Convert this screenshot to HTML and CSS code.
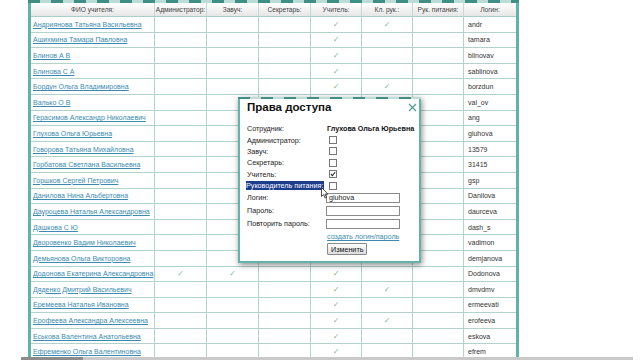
FILE: index.html
```html
<!DOCTYPE html>
<html lang="ru">
<head>
  <meta charset="UTF-8">
  <title>Права доступа</title>
  <link rel="stylesheet" href="styles.css">
</head>
<body>
  <div class="sheet">
    <table class="staff">
      <colgroup>
        <col class="c-name"><col class="c-wide"><col class="c-wide"><col class="c-wide">
        <col class="c-narrow"><col class="c-narrow"><col class="c-narrow"><col class="c-wide">
      </colgroup>
      <thead>
        <tr>
          <th>ФИО учителя:</th><th>Администратор:</th><th>Завуч:</th><th>Секретарь:</th>
          <th>Учитель:</th><th>Кл. рук.:</th><th>Рук. питания:</th><th>Логин:</th>
        </tr>
      </thead>
      <tbody>
        <tr><td class="name"><a href="#">Андриянова Татьяна Васильевна</a></td><td></td><td></td><td></td><td class="mark">✓</td><td class="mark">✓</td><td></td><td>andr</td></tr>
        <tr><td class="name"><a href="#">Ашихмина Тамара Павловна</a></td><td></td><td></td><td></td><td class="mark">✓</td><td></td><td></td><td>tamara</td></tr>
        <tr><td class="name"><a href="#">Блинов А В</a></td><td></td><td></td><td></td><td class="mark">✓</td><td></td><td></td><td>blinovav</td></tr>
        <tr><td class="name"><a href="#">Блинова С А</a></td><td></td><td></td><td></td><td class="mark">✓</td><td></td><td></td><td>sablinova</td></tr>
        <tr><td class="name"><a href="#">Бордун Ольга Владимировна</a></td><td></td><td></td><td></td><td class="mark">✓</td><td class="mark">✓</td><td></td><td>borzdun</td></tr>
        <tr><td class="name"><a href="#">Валько О В</a></td><td></td><td></td><td></td><td></td><td></td><td></td><td>val_ov</td></tr>
        <tr><td class="name"><a href="#">Герасимов Александр Николаевич</a></td><td></td><td></td><td></td><td></td><td></td><td></td><td>ang</td></tr>
        <tr><td class="name"><a href="#">Глухова Ольга Юрьевна</a></td><td></td><td></td><td></td><td></td><td></td><td></td><td>gluhova</td></tr>
        <tr><td class="name"><a href="#">Говорова Татьяна Михайловна</a></td><td></td><td></td><td></td><td></td><td></td><td></td><td>13579</td></tr>
        <tr><td class="name"><a href="#">Горбатова Светлана Васильевна</a></td><td></td><td></td><td></td><td></td><td></td><td></td><td>31415</td></tr>
        <tr><td class="name"><a href="#">Горшков Сергей Петрович</a></td><td></td><td></td><td></td><td></td><td></td><td></td><td>gsp</td></tr>
        <tr><td class="name"><a href="#">Данилова Нина Альбертовна</a></td><td></td><td></td><td></td><td></td><td></td><td></td><td>Danilova</td></tr>
        <tr><td class="name"><a href="#">Дауроцева Наталья Александровна</a></td><td></td><td></td><td></td><td></td><td></td><td></td><td>daurceva</td></tr>
        <tr><td class="name"><a href="#">Дашкова С Ю</a></td><td></td><td></td><td></td><td></td><td></td><td></td><td>dash_s</td></tr>
        <tr><td class="name"><a href="#">Дворовенко Вадим Николаевич</a></td><td></td><td></td><td></td><td></td><td></td><td></td><td>vadimon</td></tr>
        <tr><td class="name"><a href="#">Демьянова Ольга Викторовна</a></td><td></td><td></td><td></td><td></td><td></td><td></td><td>demjanova</td></tr>
        <tr><td class="name"><a href="#">Додонова Екатерина Александровна</a></td><td class="mark">✓</td><td class="mark">✓</td><td></td><td class="mark">✓</td><td></td><td></td><td>Dodonova</td></tr>
        <tr><td class="name"><a href="#">Дяденко Дмитрий Васильевич</a></td><td></td><td></td><td></td><td class="mark">✓</td><td class="mark">✓</td><td></td><td>dmvdmv</td></tr>
        <tr><td class="name"><a href="#">Еремеева Наталья Ивановна</a></td><td></td><td></td><td></td><td class="mark">✓</td><td></td><td></td><td>ermeevati</td></tr>
        <tr><td class="name"><a href="#">Ерофеева Александра Алексеевна</a></td><td></td><td></td><td></td><td class="mark">✓</td><td class="mark">✓</td><td></td><td>erofeeva</td></tr>
        <tr><td class="name"><a href="#">Еськова Валентина Анатольевна</a></td><td></td><td></td><td></td><td class="mark">✓</td><td></td><td></td><td>eskova</td></tr>
        <tr><td class="name"><a href="#">Ефременко Ольга Валентиновна</a></td><td></td><td></td><td></td><td class="mark">✓</td><td></td><td></td><td>efrem</td></tr>
      </tbody>
    </table>
  </div>

  <!-- окно прав доступа -->
  <div class="dialog">
    <div class="dialog-head">
      <span class="dialog-title">Права доступа</span>
      <svg class="close" width="9" height="9" viewBox="0 0 9 9"><path d="M1 1L8 8M8 1L1 8" stroke="#4f9d97" stroke-width="1.2" fill="none"/></svg>
    </div>
    <div class="form">
      <div class="row"><span class="label">Сотрудник:</span><b class="who">Глухова Ольга Юрьевна</b></div>
      <div class="row"><span class="label">Администратор:</span><span class="cb"></span></div>
      <div class="row"><span class="label">Завуч:</span><span class="cb"></span></div>
      <div class="row"><span class="label">Секретарь:</span><span class="cb"></span></div>
      <div class="row"><span class="label">Учитель:</span><span class="cb"><svg width="6" height="6" viewBox="0 0 6 6"><path d="M0.8 3L2.4 4.6L5.2 1" stroke="#333" stroke-width="1.1" fill="none"/></svg></span></div>
      <div class="row"><span class="label"><span class="selected">Руководитель питания:</span></span><span class="cb"></span></div>
      <div class="row tall"><span class="label">Логин:</span><input class="field" type="text" value="gluhova"></div>
      <div class="row tall"><span class="label">Пароль:</span><input class="field" type="password"></div>
      <div class="row tall"><span class="label">Повторить пароль:</span><input class="field" type="password"></div>
      <div class="row tall"><span class="label"></span><a class="make" href="#">создать логин/пароль</a></div>
      <div class="row"><span class="label"></span><button class="save">Изменить</button></div>
    </div>
  </div>

  <svg class="pointer" width="8" height="12" viewBox="0 0 8 12"><path d="M0.5 0.5L0.5 9.5L2.6 7.6L4.1 11L5.5 10.4L4 7.1L7 7.1Z" fill="#fff" stroke="#222" stroke-width="0.8"/></svg>

  <div class="timeline"><span class="played"></span></div>
</body>
</html>
```

FILE: styles.css
```css
body { margin: 0; height: 360px; overflow: hidden; background: #fff; font-family: "Liberation Sans", Arial, sans-serif; color: #333; }

.sheet { margin-left: 28px; width: 491px; }
.sheet::before { content: ""; display: block; height: 3px; background: repeating-linear-gradient(90deg, #3f8f87 0 12px, #bcdcd7 12px 23px); }

.staff { border-collapse: separate; border-spacing: 0; table-layout: fixed; width: 491px; border-left: 3px solid #5fb3aa; border-right: 3px solid #5fb3aa; font-size: 7px; }
.c-name { width: 124px; }
.c-wide { width: 52px; }
.c-narrow { width: 51px; }
.staff th { height: 14px; box-sizing: border-box; padding: 0; font-weight: normal; font-size: 6.6px; color: #444; background: linear-gradient(#fff, #e6e6e6); border-right: 1px solid #c8d8d6; border-bottom: 1px solid #a9cdc8; }
.staff td { height: 15.6px; box-sizing: border-box; padding: 0 4px; white-space: nowrap; overflow: hidden; color: #333; border-right: 1px solid #b2d2cd; border-bottom: 1px solid #b2d2cd; }
.staff th:last-child, .staff td:last-child { border-right: none; }
.staff td.name { padding-left: 2px; }
.staff a { color: #3b8bb0; }
.staff td.mark { text-align: center; color: #86b494; font-family: "DejaVu Sans", sans-serif; font-size: 8px; }

.dialog { position: absolute; left: 238px; top: 97px; width: 179px; height: 162px; background: #fff; border: 2px solid #63b3aa; border-top-color: transparent; box-shadow: 1px 2px 6px rgba(0, 0, 0, 0.45); font-size: 7.2px; color: #222; }
.dialog::before { content: ""; position: absolute; left: -2px; right: -2px; top: -2px; height: 2px; background: repeating-linear-gradient(90deg, #3f8f87 0 12px, #bcdcd7 12px 23px); }
.dialog-head { display: flex; justify-content: space-between; align-items: flex-start; height: 23px; padding: 1px 2px 0 7px; }
.dialog-title { font-size: 11.5px; font-weight: bold; color: #111; line-height: 14px; }
.close { margin-top: 3px; }

.form { padding-left: 7px; }
.row { display: flex; align-items: center; height: 11.4px; }
.row.tall { height: 13px; }
.label { width: 80px; flex: none; white-space: nowrap; }
.selected { background: #1c3c8c; color: #fff; padding: 0 1px 0 0; margin-left: -1px; }
.who { font-weight: bold; color: #111; white-space: nowrap; }
.cb { width: 6px; height: 6px; margin-left: 2px; border: 1px solid #777; background: #fff; display: flex; }
.cb svg { margin: 0; }
.field { width: 74px; height: 10px; box-sizing: border-box; margin-left: -1px; padding: 0 2px; border: 1px solid #8a8a8a; font: 7.2px "Liberation Sans", Arial, sans-serif; color: #222; }
.make { color: #3b8bb0; }
.save { height: 12px; padding: 0 3px; font: 7.2px "Liberation Sans", Arial, sans-serif; color: #111; border: 1px solid #8a8a8a; border-radius: 1px; background: linear-gradient(#fff, #dcdcdc); }

.pointer { position: absolute; left: 321px; top: 187px; }

.timeline { position: fixed; left: 21px; bottom: 0; width: 612px; height: 3px; background: #c9c9c9; display: flex; }
.played { width: 62px; background: #8c8c8c; }
```
